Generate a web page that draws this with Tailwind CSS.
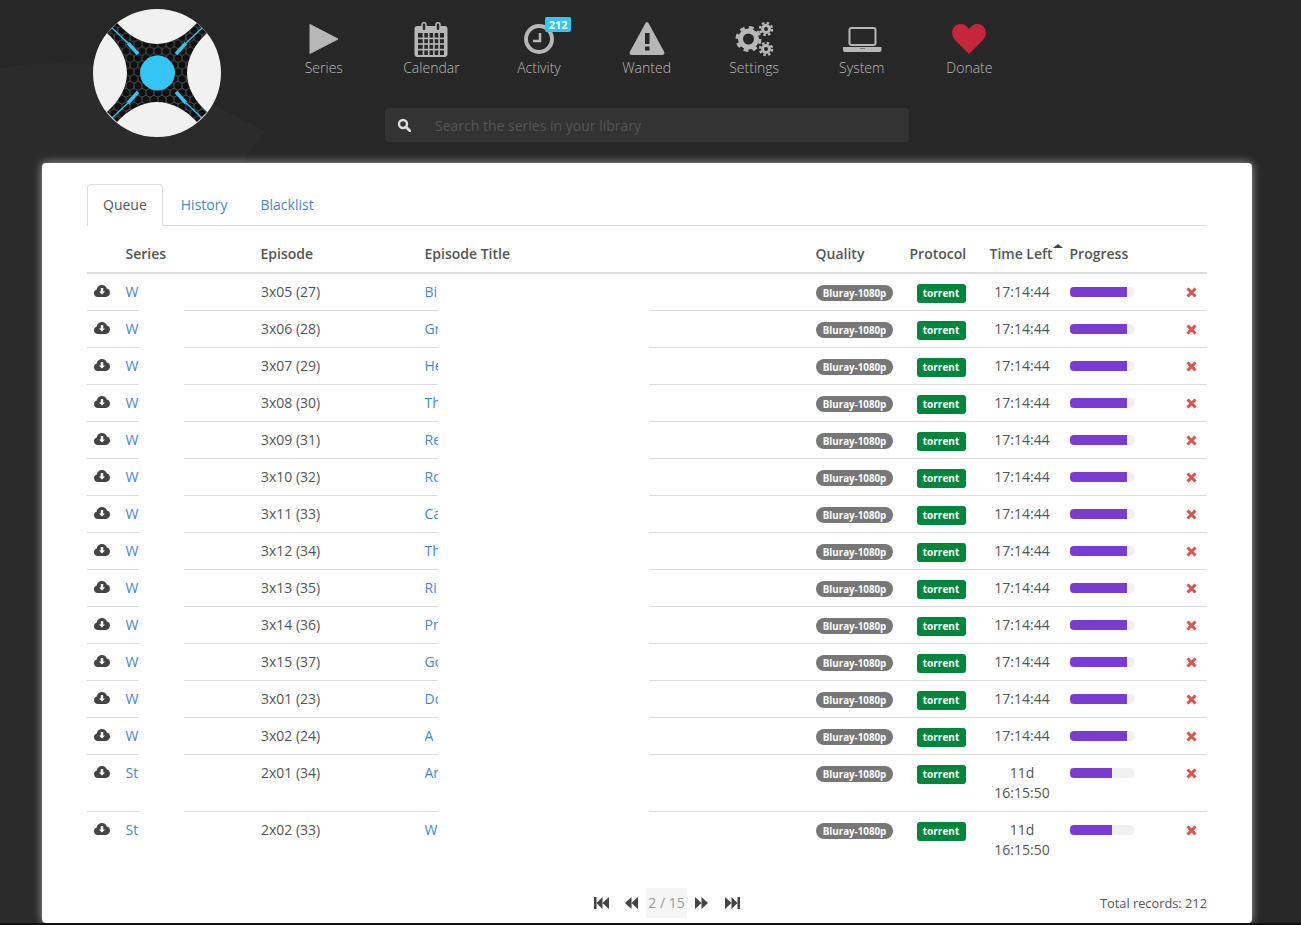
<!DOCTYPE html>
<html>
<head>
<meta charset="utf-8">
<script src="https://cdn.jsdelivr.net/npm/@tailwindcss/browser@4"></script>
<title>Sonarr Queue</title>
</head>
<body class="bg-[#272727] font-['Open_Sans',sans-serif] text-[14px] leading-[20px] text-[#555]">
<div class="relative h-[925px] w-[1301px] overflow-hidden">
  <svg class="absolute left-0 top-0" width="320" height="925" viewBox="0 0 320 925"><path d="M0 68 C50 60 110 60 160 80 C190 92 240 118 265 132 L240 165 L42 165 L42 925 L0 925 Z" fill="#2b2b2b"/></svg>
  <svg class="hidden"><defs>
    <symbol id="cloud" viewBox="0 0 16 14"><path d="M4 13 C1.5 13 0 11.2 0 9.2 C0 7.4 1.2 6 2.8 5.6 C3 3.2 5 1 8 1 C10.4 1 12.2 2.4 12.8 4.4 C14.8 4.6 16 6.4 16 8.6 C16 11 14.2 13 12 13 Z" fill="#444"/><path d="M6.8 4 H9.2 V7.4 H11 L8 10.6 L5 7.4 H6.8 Z" fill="#fff"/></symbol>
    <symbol id="cross" viewBox="0 0 11 11"><path d="M1.5 1.5 L9.5 9.5 M9.5 1.5 L1.5 9.5" stroke="#d9534f" stroke-width="3"/></symbol>
  </defs></svg>
  <header class="relative flex h-[163px]">
    <div class="w-[90px] shrink-0"></div>
    <div class="w-[135px] shrink-0 pt-[5px]">
      <svg width="135" height="135" viewBox="0 0 135 135">
        <defs><pattern id="hex" width="8" height="13.86" patternUnits="userSpaceOnUse"><path d="M0 2.3 L4 0 L8 2.3 V6.9 L4 9.2 L0 6.9 Z M4 9.2 V13.86" fill="none" stroke="#606060" stroke-width=".8"/></pattern></defs>
        <circle cx="67" cy="68" r="64" fill="#f1f1f1"/>
        <path d="M27 18 C38 30 52 39 67 39 C82 39 96 30 107 18 L117 28 C105 39 97 53 97 68 C97 83 105 96 117 107 L107 117 C96 105 82 97 67 97 C52 97 38 105 27 117 L17 107 C29 96 37 83 37 68 C37 53 29 39 17 28 Z" fill="#0f0f0f"/>
        <path d="M27 18 C38 30 52 39 67 39 C82 39 96 30 107 18 L117 28 C105 39 97 53 97 68 C97 83 105 96 117 107 L107 117 C96 105 82 97 67 97 C52 97 38 105 27 117 L17 107 C29 96 37 83 37 68 C37 53 29 39 17 28 Z" fill="url(#hex)"/>
        <circle cx="67.5" cy="68" r="17.5" fill="#35c5f4"/>
        <g stroke="#35c5f4" stroke-linecap="butt">
          <path d="M22 23 L38 38 M112 23 L96 38 M22 113 L38 98 M112 113 L96 98" stroke-width="1.3"/>
          <path d="M38 38 L48 49 M96 38 L86 49 M38 98 L48 87 M96 98 L86 87" stroke-width="3.4"/>
        </g>
      </svg>
    </div>
    <div class="flex flex-col">
      <nav class="ml-[45px] flex h-[108px] font-light text-[#bbb]">
        <a class="flex w-[107.6px] flex-col items-center pt-[22px]">
          <svg width="34" height="36" viewBox="0 0 34 36"><path d="M3 2.5 L31 17 L3 31.5 Z" fill="#b7b7b7" stroke="#b7b7b7" stroke-linejoin="round"/></svg>
          <span>Series</span>
        </a>
        <a class="flex w-[107.6px] flex-col items-center pt-[22px]">
          <svg width="34" height="36" viewBox="0 0 34 36"><rect x="0.5" y="4" width="33" height="31" rx="3" fill="#b7b7b7"/><rect x="4" y="11" width="26" height="22" fill="#272727"/><g fill="#b7b7b7"><rect x="8.7" y="11" width="1.6" height="22"/><rect x="13.9" y="11" width="1.6" height="22"/><rect x="19.1" y="11" width="1.6" height="22"/><rect x="24.3" y="11" width="1.6" height="22"/><rect x="4" y="15.6" width="26" height="1.6"/><rect x="4" y="21.2" width="26" height="1.6"/><rect x="4" y="26.8" width="26" height="1.6"/></g><rect x="8" y="0.7" width="4" height="8" rx="2" fill="#272727" stroke="#b7b7b7" stroke-width="1.5"/><rect x="22" y="0.7" width="4" height="8" rx="2" fill="#272727" stroke="#b7b7b7" stroke-width="1.5"/></svg>
          <span>Calendar</span>
        </a>
        <a class="relative flex w-[107.6px] flex-col items-center pt-[22px]">
          <svg width="34" height="36" viewBox="0 0 34 36"><circle cx="17" cy="17" r="13" fill="none" stroke="#b7b7b7" stroke-width="4"/><path d="M18 11 V19 H11" fill="none" stroke="#b7b7b7" stroke-width="2.5"/></svg>
          <span>Activity</span>
          <span class="absolute left-[60px] top-[17px] flex h-[15px] w-[26px] items-center justify-center rounded-[2px] bg-[#35c5f4] text-[11px] font-bold text-white">212</span>
        </a>
        <a class="flex w-[107.6px] flex-col items-center pt-[22px]">
          <svg width="36" height="36" viewBox="0 0 36 36"><path d="M18 0 Q19 0 20 2 L35 29.5 Q36.5 33 33 33 L3 33 Q-.5 33 1 29.5 L16 2 Q17 0 18 0 Z" fill="#b7b7b7"/><rect x="16" y="11" width="4.5" height="11" fill="#272727"/><rect x="16" y="24.5" width="4.5" height="4" fill="#272727"/></svg>
          <span>Wanted</span>
        </a>
        <a class="flex w-[107.6px] flex-col items-center pt-[22px]">
          <svg width="40" height="36" viewBox="0 0 40 36"><g fill="none" stroke="#b7b7b7"><circle cx="14.5" cy="17" r="8" stroke-width="5"/><circle cx="14.5" cy="17" r="11.5" stroke-width="3" stroke-dasharray="4.8 4.23"/><circle cx="32" cy="7" r="3.5" stroke-width="3"/><circle cx="32" cy="7" r="6" stroke-width="2.4" stroke-dasharray="2.5 2.2"/><circle cx="32" cy="27" r="3.5" stroke-width="3"/><circle cx="32" cy="27" r="6" stroke-width="2.4" stroke-dasharray="2.5 2.2"/></g></svg>
          <span>Settings</span>
        </a>
        <a class="flex w-[107.6px] flex-col items-center pt-[22px]">
          <svg width="40" height="36" viewBox="0 0 40 36"><rect x="7.5" y="6" width="26" height="17" rx="2" fill="none" stroke="#b7b7b7" stroke-width="2"/><path d="M1 25 H39.5 V28 Q39.5 30 37.5 30 H3 Q1 30 1 28 Z" fill="#b7b7b7"/><rect x="18" y="26" width="5" height="1" fill="#777"/></svg>
          <span>System</span>
        </a>
        <a class="flex w-[107.6px] flex-col items-center pt-[22px]">
          <svg width="38" height="36" viewBox="0 0 38 36"><path d="M19 32 L5 18 C-1 11 3 2 10.5 2 C14 2 17 4 19 7 C21 4 24 2 27.5 2 C35 2 39 11 33 18 Z" fill="#c4273c"/></svg>
          <span>Donate</span>
        </a>
      </nav>
      <div class="ml-[160px] flex h-[34px] w-[524px] items-center rounded-[4px] bg-[#333]">
        <svg class="ml-[12px]" width="14" height="14" viewBox="0 0 14 14"><circle cx="6" cy="6" r="4" fill="none" stroke="#ddd" stroke-width="2.4"/><path d="M9 9 L13 13" stroke="#ddd" stroke-width="2.6" stroke-linecap="round"/></svg>
        <span class="ml-[24px] mt-[2px] text-[#555]">Search the series in your library</span>
      </div>
    </div>
  </header>

  <main class="relative mx-[42px] h-[760px] w-[1210px] rounded-[4px] bg-white px-[45px] pt-[21px] shadow-[0_0_10px_rgba(255,255,255,0.55)]">
    <div class="flex h-[42px] border-b border-[#ddd]">
      <a class="h-[42px] rounded-t-[4px] border border-[#ddd] border-b-white bg-white px-[15px] py-[10px] text-[#555]">Queue</a>
      <a class="ml-[3px] px-[15px] py-[11px] text-[#4a88c9]">History</a>
      <a class="pl-[18px] py-[11px] text-[#4a88c9]">Blacklist</a>
    </div>
    <div class="mt-[10px] grid h-[38px] grid-cols-[38.5px_135px_164px_391px_94px_80px_80px_137px] border-b-2 border-[#ddd] pt-[8px] font-semibold">
      <span></span><span>Series</span><span>Episode</span><span>Episode Title</span><span>Quality</span><span>Protocol</span>
      <span class="relative">Time Left<span class="absolute left-[63px] top-[0px] h-0 w-0 border-x-[5px] border-b-[4px] border-x-transparent border-b-[#444]"></span></span><span>Progress</span>
    </div>

    <div class="flex h-[37px]"><div class="flex w-[52px] border-b border-[#ddd] pt-[8px]"><svg class="ml-[7px] mt-[2px] h-[14px] w-[16px]"><use href="#cloud"/></svg><a class="ml-[15.5px] text-[#4a88c9]">W</a></div><div class="w-[45px]"></div><div class="flex w-[254px] border-b border-[#ddd] pt-[8px]"><span class="ml-[77px] w-[163.5px]">3x05 (27)</span><a class="w-[13.5px] overflow-hidden whitespace-nowrap text-[#4a88c9]">Bi</a></div><div class="w-[211px]"></div><div class="flex w-[558px] border-b border-[#ddd] pl-[167px] pt-[8px]"><div class="w-[94px]"><span class="mt-[3px] flex h-[16px] w-[77px] items-center justify-center rounded-full bg-[#777] pt-[1px] text-[9.75px] font-bold text-white">Bluray-1080p</span></div><div class="flex w-[62px] justify-center"><span class="mt-[2px] flex h-[19px] w-[49px] items-center justify-center rounded-[3px] bg-[#00853d] pb-[1px] text-[10px] font-bold text-white">torrent</span></div><div class="ml-[10px] w-[80px] text-center">17:14:44</div><div class="ml-[8px] mt-[5px] h-[10px] w-[64px] overflow-hidden rounded-[4px] bg-[#f0f0f0]"><div class="h-full w-[89%] bg-[#7a3bd1]"></div></div><svg class="ml-[52px] mt-[5px] h-[11px] w-[11px]"><use href="#cross"/></svg></div></div>

    <div class="flex h-[37px]"><div class="flex w-[52px] border-b border-[#ddd] pt-[8px]"><svg class="ml-[7px] mt-[2px] h-[14px] w-[16px]"><use href="#cloud"/></svg><a class="ml-[15.5px] text-[#4a88c9]">W</a></div><div class="w-[45px]"></div><div class="flex w-[254px] border-b border-[#ddd] pt-[8px]"><span class="ml-[77px] w-[163.5px]">3x06 (28)</span><a class="w-[13.5px] overflow-hidden whitespace-nowrap text-[#4a88c9]">Gr</a></div><div class="w-[211px]"></div><div class="flex w-[558px] border-b border-[#ddd] pl-[167px] pt-[8px]"><div class="w-[94px]"><span class="mt-[3px] flex h-[16px] w-[77px] items-center justify-center rounded-full bg-[#777] pt-[1px] text-[9.75px] font-bold text-white">Bluray-1080p</span></div><div class="flex w-[62px] justify-center"><span class="mt-[2px] flex h-[19px] w-[49px] items-center justify-center rounded-[3px] bg-[#00853d] pb-[1px] text-[10px] font-bold text-white">torrent</span></div><div class="ml-[10px] w-[80px] text-center">17:14:44</div><div class="ml-[8px] mt-[5px] h-[10px] w-[64px] overflow-hidden rounded-[4px] bg-[#f0f0f0]"><div class="h-full w-[89%] bg-[#7a3bd1]"></div></div><svg class="ml-[52px] mt-[5px] h-[11px] w-[11px]"><use href="#cross"/></svg></div></div>

    <div class="flex h-[37px]"><div class="flex w-[52px] border-b border-[#ddd] pt-[8px]"><svg class="ml-[7px] mt-[2px] h-[14px] w-[16px]"><use href="#cloud"/></svg><a class="ml-[15.5px] text-[#4a88c9]">W</a></div><div class="w-[45px]"></div><div class="flex w-[254px] border-b border-[#ddd] pt-[8px]"><span class="ml-[77px] w-[163.5px]">3x07 (29)</span><a class="w-[13.5px] overflow-hidden whitespace-nowrap text-[#4a88c9]">He</a></div><div class="w-[211px]"></div><div class="flex w-[558px] border-b border-[#ddd] pl-[167px] pt-[8px]"><div class="w-[94px]"><span class="mt-[3px] flex h-[16px] w-[77px] items-center justify-center rounded-full bg-[#777] pt-[1px] text-[9.75px] font-bold text-white">Bluray-1080p</span></div><div class="flex w-[62px] justify-center"><span class="mt-[2px] flex h-[19px] w-[49px] items-center justify-center rounded-[3px] bg-[#00853d] pb-[1px] text-[10px] font-bold text-white">torrent</span></div><div class="ml-[10px] w-[80px] text-center">17:14:44</div><div class="ml-[8px] mt-[5px] h-[10px] w-[64px] overflow-hidden rounded-[4px] bg-[#f0f0f0]"><div class="h-full w-[89%] bg-[#7a3bd1]"></div></div><svg class="ml-[52px] mt-[5px] h-[11px] w-[11px]"><use href="#cross"/></svg></div></div>

    <div class="flex h-[37px]"><div class="flex w-[52px] border-b border-[#ddd] pt-[8px]"><svg class="ml-[7px] mt-[2px] h-[14px] w-[16px]"><use href="#cloud"/></svg><a class="ml-[15.5px] text-[#4a88c9]">W</a></div><div class="w-[45px]"></div><div class="flex w-[254px] border-b border-[#ddd] pt-[8px]"><span class="ml-[77px] w-[163.5px]">3x08 (30)</span><a class="w-[13.5px] overflow-hidden whitespace-nowrap text-[#4a88c9]">Th</a></div><div class="w-[211px]"></div><div class="flex w-[558px] border-b border-[#ddd] pl-[167px] pt-[8px]"><div class="w-[94px]"><span class="mt-[3px] flex h-[16px] w-[77px] items-center justify-center rounded-full bg-[#777] pt-[1px] text-[9.75px] font-bold text-white">Bluray-1080p</span></div><div class="flex w-[62px] justify-center"><span class="mt-[2px] flex h-[19px] w-[49px] items-center justify-center rounded-[3px] bg-[#00853d] pb-[1px] text-[10px] font-bold text-white">torrent</span></div><div class="ml-[10px] w-[80px] text-center">17:14:44</div><div class="ml-[8px] mt-[5px] h-[10px] w-[64px] overflow-hidden rounded-[4px] bg-[#f0f0f0]"><div class="h-full w-[89%] bg-[#7a3bd1]"></div></div><svg class="ml-[52px] mt-[5px] h-[11px] w-[11px]"><use href="#cross"/></svg></div></div>

    <div class="flex h-[37px]"><div class="flex w-[52px] border-b border-[#ddd] pt-[8px]"><svg class="ml-[7px] mt-[2px] h-[14px] w-[16px]"><use href="#cloud"/></svg><a class="ml-[15.5px] text-[#4a88c9]">W</a></div><div class="w-[45px]"></div><div class="flex w-[254px] border-b border-[#ddd] pt-[8px]"><span class="ml-[77px] w-[163.5px]">3x09 (31)</span><a class="w-[13.5px] overflow-hidden whitespace-nowrap text-[#4a88c9]">Re</a></div><div class="w-[211px]"></div><div class="flex w-[558px] border-b border-[#ddd] pl-[167px] pt-[8px]"><div class="w-[94px]"><span class="mt-[3px] flex h-[16px] w-[77px] items-center justify-center rounded-full bg-[#777] pt-[1px] text-[9.75px] font-bold text-white">Bluray-1080p</span></div><div class="flex w-[62px] justify-center"><span class="mt-[2px] flex h-[19px] w-[49px] items-center justify-center rounded-[3px] bg-[#00853d] pb-[1px] text-[10px] font-bold text-white">torrent</span></div><div class="ml-[10px] w-[80px] text-center">17:14:44</div><div class="ml-[8px] mt-[5px] h-[10px] w-[64px] overflow-hidden rounded-[4px] bg-[#f0f0f0]"><div class="h-full w-[89%] bg-[#7a3bd1]"></div></div><svg class="ml-[52px] mt-[5px] h-[11px] w-[11px]"><use href="#cross"/></svg></div></div>

    <div class="flex h-[37px]"><div class="flex w-[52px] border-b border-[#ddd] pt-[8px]"><svg class="ml-[7px] mt-[2px] h-[14px] w-[16px]"><use href="#cloud"/></svg><a class="ml-[15.5px] text-[#4a88c9]">W</a></div><div class="w-[45px]"></div><div class="flex w-[254px] border-b border-[#ddd] pt-[8px]"><span class="ml-[77px] w-[163.5px]">3x10 (32)</span><a class="w-[13.5px] overflow-hidden whitespace-nowrap text-[#4a88c9]">Ro</a></div><div class="w-[211px]"></div><div class="flex w-[558px] border-b border-[#ddd] pl-[167px] pt-[8px]"><div class="w-[94px]"><span class="mt-[3px] flex h-[16px] w-[77px] items-center justify-center rounded-full bg-[#777] pt-[1px] text-[9.75px] font-bold text-white">Bluray-1080p</span></div><div class="flex w-[62px] justify-center"><span class="mt-[2px] flex h-[19px] w-[49px] items-center justify-center rounded-[3px] bg-[#00853d] pb-[1px] text-[10px] font-bold text-white">torrent</span></div><div class="ml-[10px] w-[80px] text-center">17:14:44</div><div class="ml-[8px] mt-[5px] h-[10px] w-[64px] overflow-hidden rounded-[4px] bg-[#f0f0f0]"><div class="h-full w-[89%] bg-[#7a3bd1]"></div></div><svg class="ml-[52px] mt-[5px] h-[11px] w-[11px]"><use href="#cross"/></svg></div></div>

    <div class="flex h-[37px]"><div class="flex w-[52px] border-b border-[#ddd] pt-[8px]"><svg class="ml-[7px] mt-[2px] h-[14px] w-[16px]"><use href="#cloud"/></svg><a class="ml-[15.5px] text-[#4a88c9]">W</a></div><div class="w-[45px]"></div><div class="flex w-[254px] border-b border-[#ddd] pt-[8px]"><span class="ml-[77px] w-[163.5px]">3x11 (33)</span><a class="w-[13.5px] overflow-hidden whitespace-nowrap text-[#4a88c9]">Ca</a></div><div class="w-[211px]"></div><div class="flex w-[558px] border-b border-[#ddd] pl-[167px] pt-[8px]"><div class="w-[94px]"><span class="mt-[3px] flex h-[16px] w-[77px] items-center justify-center rounded-full bg-[#777] pt-[1px] text-[9.75px] font-bold text-white">Bluray-1080p</span></div><div class="flex w-[62px] justify-center"><span class="mt-[2px] flex h-[19px] w-[49px] items-center justify-center rounded-[3px] bg-[#00853d] pb-[1px] text-[10px] font-bold text-white">torrent</span></div><div class="ml-[10px] w-[80px] text-center">17:14:44</div><div class="ml-[8px] mt-[5px] h-[10px] w-[64px] overflow-hidden rounded-[4px] bg-[#f0f0f0]"><div class="h-full w-[89%] bg-[#7a3bd1]"></div></div><svg class="ml-[52px] mt-[5px] h-[11px] w-[11px]"><use href="#cross"/></svg></div></div>

    <div class="flex h-[37px]"><div class="flex w-[52px] border-b border-[#ddd] pt-[8px]"><svg class="ml-[7px] mt-[2px] h-[14px] w-[16px]"><use href="#cloud"/></svg><a class="ml-[15.5px] text-[#4a88c9]">W</a></div><div class="w-[45px]"></div><div class="flex w-[254px] border-b border-[#ddd] pt-[8px]"><span class="ml-[77px] w-[163.5px]">3x12 (34)</span><a class="w-[13.5px] overflow-hidden whitespace-nowrap text-[#4a88c9]">Th</a></div><div class="w-[211px]"></div><div class="flex w-[558px] border-b border-[#ddd] pl-[167px] pt-[8px]"><div class="w-[94px]"><span class="mt-[3px] flex h-[16px] w-[77px] items-center justify-center rounded-full bg-[#777] pt-[1px] text-[9.75px] font-bold text-white">Bluray-1080p</span></div><div class="flex w-[62px] justify-center"><span class="mt-[2px] flex h-[19px] w-[49px] items-center justify-center rounded-[3px] bg-[#00853d] pb-[1px] text-[10px] font-bold text-white">torrent</span></div><div class="ml-[10px] w-[80px] text-center">17:14:44</div><div class="ml-[8px] mt-[5px] h-[10px] w-[64px] overflow-hidden rounded-[4px] bg-[#f0f0f0]"><div class="h-full w-[89%] bg-[#7a3bd1]"></div></div><svg class="ml-[52px] mt-[5px] h-[11px] w-[11px]"><use href="#cross"/></svg></div></div>

    <div class="flex h-[37px]"><div class="flex w-[52px] border-b border-[#ddd] pt-[8px]"><svg class="ml-[7px] mt-[2px] h-[14px] w-[16px]"><use href="#cloud"/></svg><a class="ml-[15.5px] text-[#4a88c9]">W</a></div><div class="w-[45px]"></div><div class="flex w-[254px] border-b border-[#ddd] pt-[8px]"><span class="ml-[77px] w-[163.5px]">3x13 (35)</span><a class="w-[13.5px] overflow-hidden whitespace-nowrap text-[#4a88c9]">Ri</a></div><div class="w-[211px]"></div><div class="flex w-[558px] border-b border-[#ddd] pl-[167px] pt-[8px]"><div class="w-[94px]"><span class="mt-[3px] flex h-[16px] w-[77px] items-center justify-center rounded-full bg-[#777] pt-[1px] text-[9.75px] font-bold text-white">Bluray-1080p</span></div><div class="flex w-[62px] justify-center"><span class="mt-[2px] flex h-[19px] w-[49px] items-center justify-center rounded-[3px] bg-[#00853d] pb-[1px] text-[10px] font-bold text-white">torrent</span></div><div class="ml-[10px] w-[80px] text-center">17:14:44</div><div class="ml-[8px] mt-[5px] h-[10px] w-[64px] overflow-hidden rounded-[4px] bg-[#f0f0f0]"><div class="h-full w-[89%] bg-[#7a3bd1]"></div></div><svg class="ml-[52px] mt-[5px] h-[11px] w-[11px]"><use href="#cross"/></svg></div></div>

    <div class="flex h-[37px]"><div class="flex w-[52px] border-b border-[#ddd] pt-[8px]"><svg class="ml-[7px] mt-[2px] h-[14px] w-[16px]"><use href="#cloud"/></svg><a class="ml-[15.5px] text-[#4a88c9]">W</a></div><div class="w-[45px]"></div><div class="flex w-[254px] border-b border-[#ddd] pt-[8px]"><span class="ml-[77px] w-[163.5px]">3x14 (36)</span><a class="w-[13.5px] overflow-hidden whitespace-nowrap text-[#4a88c9]">Pr</a></div><div class="w-[211px]"></div><div class="flex w-[558px] border-b border-[#ddd] pl-[167px] pt-[8px]"><div class="w-[94px]"><span class="mt-[3px] flex h-[16px] w-[77px] items-center justify-center rounded-full bg-[#777] pt-[1px] text-[9.75px] font-bold text-white">Bluray-1080p</span></div><div class="flex w-[62px] justify-center"><span class="mt-[2px] flex h-[19px] w-[49px] items-center justify-center rounded-[3px] bg-[#00853d] pb-[1px] text-[10px] font-bold text-white">torrent</span></div><div class="ml-[10px] w-[80px] text-center">17:14:44</div><div class="ml-[8px] mt-[5px] h-[10px] w-[64px] overflow-hidden rounded-[4px] bg-[#f0f0f0]"><div class="h-full w-[89%] bg-[#7a3bd1]"></div></div><svg class="ml-[52px] mt-[5px] h-[11px] w-[11px]"><use href="#cross"/></svg></div></div>

    <div class="flex h-[37px]"><div class="flex w-[52px] border-b border-[#ddd] pt-[8px]"><svg class="ml-[7px] mt-[2px] h-[14px] w-[16px]"><use href="#cloud"/></svg><a class="ml-[15.5px] text-[#4a88c9]">W</a></div><div class="w-[45px]"></div><div class="flex w-[254px] border-b border-[#ddd] pt-[8px]"><span class="ml-[77px] w-[163.5px]">3x15 (37)</span><a class="w-[13.5px] overflow-hidden whitespace-nowrap text-[#4a88c9]">Go</a></div><div class="w-[211px]"></div><div class="flex w-[558px] border-b border-[#ddd] pl-[167px] pt-[8px]"><div class="w-[94px]"><span class="mt-[3px] flex h-[16px] w-[77px] items-center justify-center rounded-full bg-[#777] pt-[1px] text-[9.75px] font-bold text-white">Bluray-1080p</span></div><div class="flex w-[62px] justify-center"><span class="mt-[2px] flex h-[19px] w-[49px] items-center justify-center rounded-[3px] bg-[#00853d] pb-[1px] text-[10px] font-bold text-white">torrent</span></div><div class="ml-[10px] w-[80px] text-center">17:14:44</div><div class="ml-[8px] mt-[5px] h-[10px] w-[64px] overflow-hidden rounded-[4px] bg-[#f0f0f0]"><div class="h-full w-[89%] bg-[#7a3bd1]"></div></div><svg class="ml-[52px] mt-[5px] h-[11px] w-[11px]"><use href="#cross"/></svg></div></div>

    <div class="flex h-[37px]"><div class="flex w-[52px] border-b border-[#ddd] pt-[8px]"><svg class="ml-[7px] mt-[2px] h-[14px] w-[16px]"><use href="#cloud"/></svg><a class="ml-[15.5px] text-[#4a88c9]">W</a></div><div class="w-[45px]"></div><div class="flex w-[254px] border-b border-[#ddd] pt-[8px]"><span class="ml-[77px] w-[163.5px]">3x01 (23)</span><a class="w-[13.5px] overflow-hidden whitespace-nowrap text-[#4a88c9]">Do</a></div><div class="w-[211px]"></div><div class="flex w-[558px] border-b border-[#ddd] pl-[167px] pt-[8px]"><div class="w-[94px]"><span class="mt-[3px] flex h-[16px] w-[77px] items-center justify-center rounded-full bg-[#777] pt-[1px] text-[9.75px] font-bold text-white">Bluray-1080p</span></div><div class="flex w-[62px] justify-center"><span class="mt-[2px] flex h-[19px] w-[49px] items-center justify-center rounded-[3px] bg-[#00853d] pb-[1px] text-[10px] font-bold text-white">torrent</span></div><div class="ml-[10px] w-[80px] text-center">17:14:44</div><div class="ml-[8px] mt-[5px] h-[10px] w-[64px] overflow-hidden rounded-[4px] bg-[#f0f0f0]"><div class="h-full w-[89%] bg-[#7a3bd1]"></div></div><svg class="ml-[52px] mt-[5px] h-[11px] w-[11px]"><use href="#cross"/></svg></div></div>

    <div class="flex h-[37px]"><div class="flex w-[52px] border-b border-[#ddd] pt-[8px]"><svg class="ml-[7px] mt-[2px] h-[14px] w-[16px]"><use href="#cloud"/></svg><a class="ml-[15.5px] text-[#4a88c9]">W</a></div><div class="w-[45px]"></div><div class="flex w-[254px] border-b border-[#ddd] pt-[8px]"><span class="ml-[77px] w-[163.5px]">3x02 (24)</span><a class="w-[13.5px] overflow-hidden whitespace-nowrap text-[#4a88c9]">A</a></div><div class="w-[211px]"></div><div class="flex w-[558px] border-b border-[#ddd] pl-[167px] pt-[8px]"><div class="w-[94px]"><span class="mt-[3px] flex h-[16px] w-[77px] items-center justify-center rounded-full bg-[#777] pt-[1px] text-[9.75px] font-bold text-white">Bluray-1080p</span></div><div class="flex w-[62px] justify-center"><span class="mt-[2px] flex h-[19px] w-[49px] items-center justify-center rounded-[3px] bg-[#00853d] pb-[1px] text-[10px] font-bold text-white">torrent</span></div><div class="ml-[10px] w-[80px] text-center">17:14:44</div><div class="ml-[8px] mt-[5px] h-[10px] w-[64px] overflow-hidden rounded-[4px] bg-[#f0f0f0]"><div class="h-full w-[89%] bg-[#7a3bd1]"></div></div><svg class="ml-[52px] mt-[5px] h-[11px] w-[11px]"><use href="#cross"/></svg></div></div>

    <div class="flex h-[57px]"><div class="flex w-[52px] border-b border-[#ddd] pt-[8px]"><svg class="ml-[7px] mt-[2px] h-[14px] w-[16px]"><use href="#cloud"/></svg><a class="ml-[15.5px] text-[#4a88c9]">St</a></div><div class="w-[45px]"></div><div class="flex w-[254px] border-b border-[#ddd] pt-[8px]"><span class="ml-[77px] w-[163.5px]">2x01 (34)</span><a class="w-[13.5px] overflow-hidden whitespace-nowrap text-[#4a88c9]">Ar</a></div><div class="w-[211px]"></div><div class="flex w-[558px] border-b border-[#ddd] pl-[167px] pt-[8px]"><div class="w-[94px]"><span class="mt-[3px] flex h-[16px] w-[77px] items-center justify-center rounded-full bg-[#777] pt-[1px] text-[9.75px] font-bold text-white">Bluray-1080p</span></div><div class="flex w-[62px] justify-center"><span class="mt-[2px] flex h-[19px] w-[49px] items-center justify-center rounded-[3px] bg-[#00853d] pb-[1px] text-[10px] font-bold text-white">torrent</span></div><div class="ml-[10px] w-[80px] text-center">11d<br>16:15:50</div><div class="ml-[8px] mt-[5px] h-[10px] w-[64px] overflow-hidden rounded-[4px] bg-[#f0f0f0]"><div class="h-full w-[65%] bg-[#7a3bd1]"></div></div><svg class="ml-[52px] mt-[5px] h-[11px] w-[11px]"><use href="#cross"/></svg></div></div>

    <div class="flex h-[57px]"><div class="flex w-[52px] pt-[8px]"><svg class="ml-[7px] mt-[2px] h-[14px] w-[16px]"><use href="#cloud"/></svg><a class="ml-[15.5px] text-[#4a88c9]">St</a></div><div class="w-[45px]"></div><div class="flex w-[254px] pt-[8px]"><span class="ml-[77px] w-[163.5px]">2x02 (33)</span><a class="w-[13.5px] overflow-hidden whitespace-nowrap text-[#4a88c9]">W</a></div><div class="w-[211px]"></div><div class="flex w-[558px] pl-[167px] pt-[8px]"><div class="w-[94px]"><span class="mt-[3px] flex h-[16px] w-[77px] items-center justify-center rounded-full bg-[#777] pt-[1px] text-[9.75px] font-bold text-white">Bluray-1080p</span></div><div class="flex w-[62px] justify-center"><span class="mt-[2px] flex h-[19px] w-[49px] items-center justify-center rounded-[3px] bg-[#00853d] pb-[1px] text-[10px] font-bold text-white">torrent</span></div><div class="ml-[10px] w-[80px] text-center">11d<br>16:15:50</div><div class="ml-[8px] mt-[5px] h-[10px] w-[64px] overflow-hidden rounded-[4px] bg-[#f0f0f0]"><div class="h-full w-[65%] bg-[#7a3bd1]"></div></div><svg class="ml-[52px] mt-[5px] h-[11px] w-[11px]"><use href="#cross"/></svg></div></div>

    <div class="mt-[19px] flex h-[30px] items-center pl-[507px]">
      <svg width="15" height="12" viewBox="0 0 15 12"><path d="M0 0 H2.5 V12 H0 Z M2.5 6 L8.5 0 V12 Z M8.5 6 L15 0 V12 Z" fill="#444"/></svg>
      <svg class="ml-[16px]" width="13" height="12" viewBox="0 0 13 12"><path d="M0 6 L6.5 0 V12 Z M6.5 6 L13 0 V12 Z" fill="#444"/></svg>
      <span class="ml-[8px] flex h-[30px] w-[41px] items-center justify-center bg-[#f5f5f5] text-[#999]">2 / 15</span>
      <svg class="ml-[8px]" width="13" height="12" viewBox="0 0 13 12"><path d="M0 0 L6.5 6 L0 12 Z M6.5 0 L13 6 L6.5 12 Z" fill="#444"/></svg>
      <svg class="ml-[17px]" width="15" height="12" viewBox="0 0 15 12"><path d="M0 0 L6.5 6 L0 12 Z M6.5 0 L12.5 6 L6.5 12 Z M12.5 0 H15 V12 H12.5 Z" fill="#444"/></svg>
      <span class="ml-auto text-[12.8px]">Total records: 212</span>
    </div>
  </main>
  <div class="relative h-[2px] w-full bg-[#111]"></div>
</div>
</body>
</html>
